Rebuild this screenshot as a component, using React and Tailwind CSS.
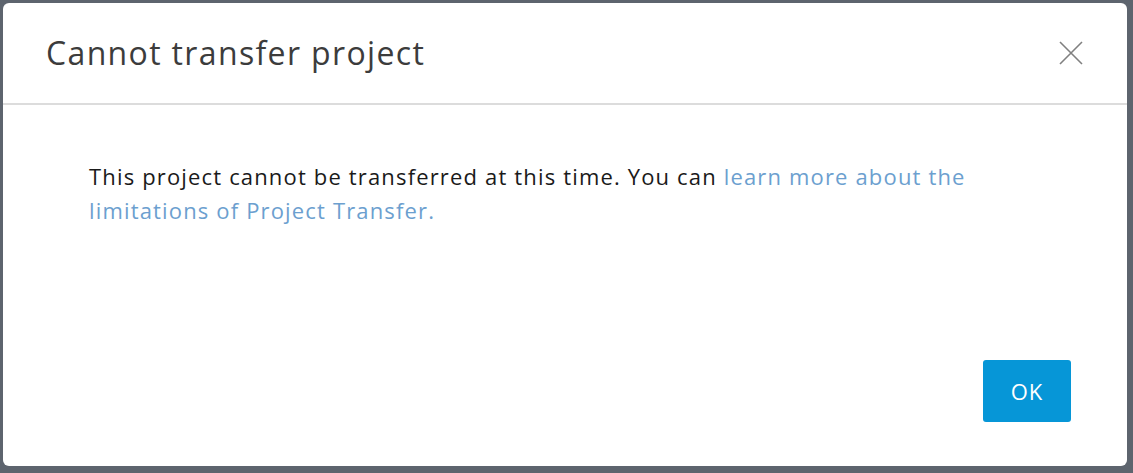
export default function App() {
  return (
    <div className="w-[1133px] h-[473px] bg-[#5d646e] pl-[3px] pt-[3px] font-['Open_Sans',sans-serif]">
      <div className="w-[1124px] h-[463px] bg-white rounded-[6px] flex flex-col">
        <div className="h-[102px] flex items-center justify-between pl-[43px] pr-[44px] border-b-2 border-[#dcdcdc]">
          <h2 className="text-[32px] text-[#3c3c3c] tracking-[1.35px]">Cannot transfer project</h2>
          <button className="w-[24px] h-[24px] text-[#808080]">
            <svg viewBox="0 0 24 24" className="w-[24px] h-[24px]" fill="none" stroke="currentColor" strokeWidth="1.6">
              <path d="M1 1L23 23M23 1L1 23" />
            </svg>
          </button>
        </div>
        <div className="flex-1 flex flex-col px-[86px] pt-[54px]">
          <p className="text-[22px] leading-[34px] text-[#1a1a1a] tracking-[1.16px] max-w-[900px]">
            This project cannot be transferred at this time. You can{" "}
            <a href="#" className="text-[#6c9fcf]">learn more about the limitations of Project Transfer.</a>
          </p>
        </div>
        <div className="flex justify-end pr-[56px] pb-[44px]">
          <button className="w-[88px] h-[62px] bg-[#0696d7] rounded-[3px] text-white text-[22px] tracking-[1px]">OK</button>
        </div>
      </div>
    </div>
  );
}
